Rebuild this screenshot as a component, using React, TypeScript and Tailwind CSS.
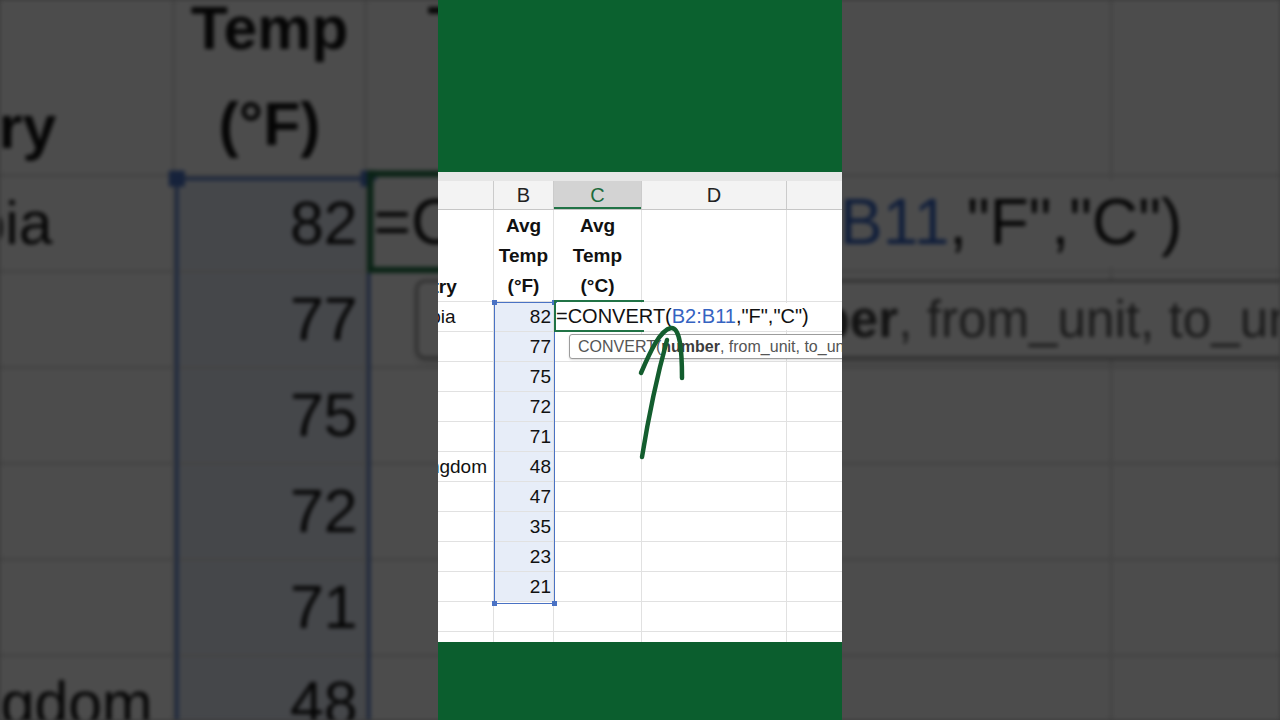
import React from 'react';

const COLS = ['w-[110px]', 'w-[60px]', 'w-[88px]', 'w-[145px]', 'w-[150px]'];
const TEMPS = [82, 77, 75, 72, 71, 48, 47, 35, 23, 21];
const COUNTRIES: Record<number, { name: string; right?: boolean }> = {
  0: { name: 'Ethiopia' },
  5: { name: 'United Kingdom', right: true },
};

function Cell({ i, className = '', children }: { i: number; className?: string; children?: React.ReactNode }) {
  return <div className={`shrink-0 overflow-hidden border-r border-[#e1e1e1] ${COLS[i]} ${className}`}>{children}</div>;
}

function HeaderText({ unit }: { unit: string }) {
  return (
    <>
      <span>Avg</span>
      <span>Temp</span>
      <span>({unit})</span>
    </>
  );
}

function Sheet() {
  return (
    <div className="relative h-[470px] w-[404px] shrink-0 overflow-hidden bg-white text-[19px] text-[#111]">
      <div className="h-[9px] bg-[#e6e6e6]" />
      <div className="-ml-[54px] w-max">
        {/* column letters */}
        <div className="flex h-[29px] border-b border-[#c6c6c6] bg-[#f3f3f3] text-[20px] text-[#222]">
          {['', 'B', 'C', 'D', 'E'].map((l, i) => (
            <div
              key={i}
              className={`shrink-0 border-r border-[#cbcbcb] text-center leading-[28px] ${COLS[i]} ${
                l === 'C' ? 'bg-[#d3d3d3] text-[#1d6b3d] shadow-[inset_0_-2px_0_#217346]' : ''
              }`}
            >
              {l}
            </div>
          ))}
        </div>

        {/* row 1 */}
        <div className="flex h-[92px] border-b border-[#e1e1e1] font-bold">
          <Cell i={0} className="flex items-end leading-[28px]">
            Country
          </Cell>
          <Cell i={1} className="flex flex-col items-center justify-end leading-[30px]">
            <HeaderText unit="°F" />
          </Cell>
          <Cell i={2} className="flex flex-col items-center justify-end leading-[30px]">
            <HeaderText unit="°C" />
          </Cell>
          <Cell i={3} />
          <Cell i={4} />
        </div>

        {/* data rows */}
        {[...TEMPS, null].map((t, r) => {
          const c = COUNTRIES[r];
          return (
            <div key={r} className="flex h-[30px] border-b border-[#e1e1e1] leading-[29px]">
              <Cell i={0} className={`flex whitespace-nowrap ${c?.right ? 'justify-end pr-[6px]' : 'pl-[3px]'}`}>
                <span className="shrink-0">{c?.name}</span>
              </Cell>
              <Cell i={1} className={`pr-[2px] text-right ${t !== null ? 'bg-[#e7edf8]' : ''}`}>
                {t}
              </Cell>
              <Cell i={2} />
              <Cell i={3} />
              <Cell i={4} />
            </div>
          );
        })}
        <div className="flex h-[10px]">
          <Cell i={0} />
          <Cell i={1} />
          <Cell i={2} />
          <Cell i={3} />
          <Cell i={4} />
        </div>
      </div>

      {/* selection B2:B11 */}
      <div className="absolute left-[56px] top-[130px] h-[302px] w-[61px] border border-[#4a72c4]" />
      {[
        'left-[54px] top-[128px]',
        'left-[114px] top-[128px]',
        'left-[54px] top-[429px]',
        'left-[114px] top-[429px]',
      ].map((p) => (
        <div key={p} className={`absolute h-[5px] w-[5px] bg-[#4a72c4] ${p}`} />
      ))}

      {/* active cell C2 */}
      <div className="absolute left-[116px] top-[128px] h-[32px] w-[90px] border-2 border-r-0 border-[#217346]" />
      <div className="absolute left-[118px] top-[131px] h-[27px] whitespace-nowrap bg-white pr-[6px] text-[20px] leading-[27px] text-[#111]">
        =CONVERT(<span className="text-[#3563c1]">B2:B11</span>,"F","C")
      </div>

      {/* function tooltip */}
      <div className="absolute left-[131px] top-[162px] h-[25px] w-[340px] whitespace-nowrap rounded-[3px] border border-[#9c9c9c] bg-white pl-[8px] text-[16px] leading-[23px] text-[#555] shadow-[0_1px_2px_rgba(0,0,0,0.15)]">
        CONVERT(<b className="text-[#3c3c3c]">number</b>, from_unit, to_unit)
      </div>
    </div>
  );
}

export default function App() {
  return (
    <div className="relative h-[720px] w-[1280px] overflow-hidden bg-[#3a3a3a] font-['Liberation_Sans',Arial,sans-serif]">
      {/* blurred zoomed backdrop */}
      <div className="absolute inset-0 overflow-hidden blur-[2px] brightness-[0.3]">
        <div className="absolute left-0 top-0 origin-top-left -translate-x-[4px] -translate-y-[239px] scale-[3.2]">
          <Sheet />
        </div>
      </div>

      <div className="relative mx-auto flex h-[720px] w-[404px] flex-col">
        <div className="h-[172px] bg-[#0b612f]" />
        <Sheet />
        <div className="flex-1 bg-[#0b5e2e]" />

        <svg className="pointer-events-none absolute inset-0" width="404" height="720" viewBox="0 0 404 720" fill="none">
          <path
            d="M203 373 C212 352 222 330 233 328 C242 327 244 350 244 378"
            stroke="#135d2e"
            strokeWidth="4.5"
            strokeLinecap="round"
            strokeLinejoin="round"
          />
          <path d="M204 457 C210 420 218 380 229 340" stroke="#135d2e" strokeWidth="4.5" strokeLinecap="round" />
        </svg>
      </div>
    </div>
  );
}
